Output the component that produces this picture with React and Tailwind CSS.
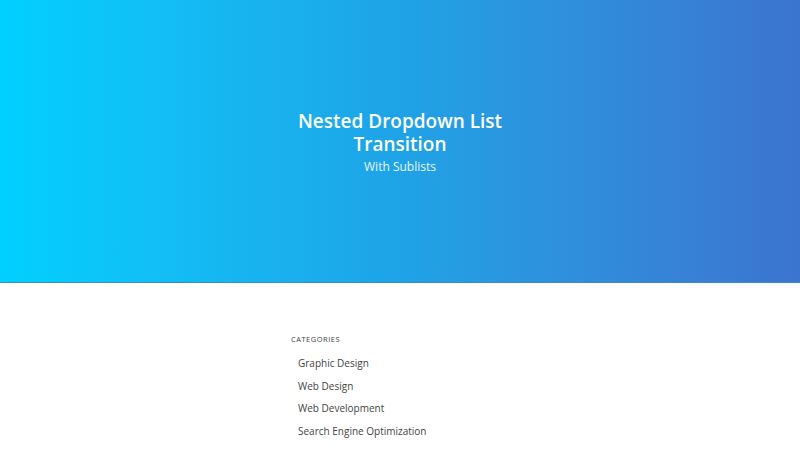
export default function App() {
  const items = ["Graphic Design", "Web Design", "Web Development", "Search Engine Optimization"];
  return (
    <div className="w-[800px] h-[450px] bg-white overflow-hidden" style={{ fontFamily: '"Open Sans", "Noto Sans", sans-serif' }}>
      <header className="h-[283px] bg-gradient-to-r from-[#00d0ff] via-[#1ea3e6] to-[#3b74cf] flex flex-col items-center justify-center text-white border-b border-[#3a8fc0]">
        <h1 className="w-[220px] text-center text-[19px] leading-[23px] font-semibold mt-[4px]">Nested Dropdown List Transition</h1>
        <p className="text-[12px] leading-[18px] mt-[2px] text-white/90">With Sublists</p>
      </header>
      <section className="w-[218px] pt-[51px] ml-[291px]">
        <h2 className="text-[7.5px] tracking-[0.5px] text-[#444] uppercase leading-[10px]">Categories</h2>
        <ul className="mt-[8px] pl-[7px]">
          {items.map((t) => (
            <li key={t} className="text-[10px] leading-[22.6px] text-[#444]">{t}</li>
          ))}
        </ul>
      </section>
    </div>
  );
}
